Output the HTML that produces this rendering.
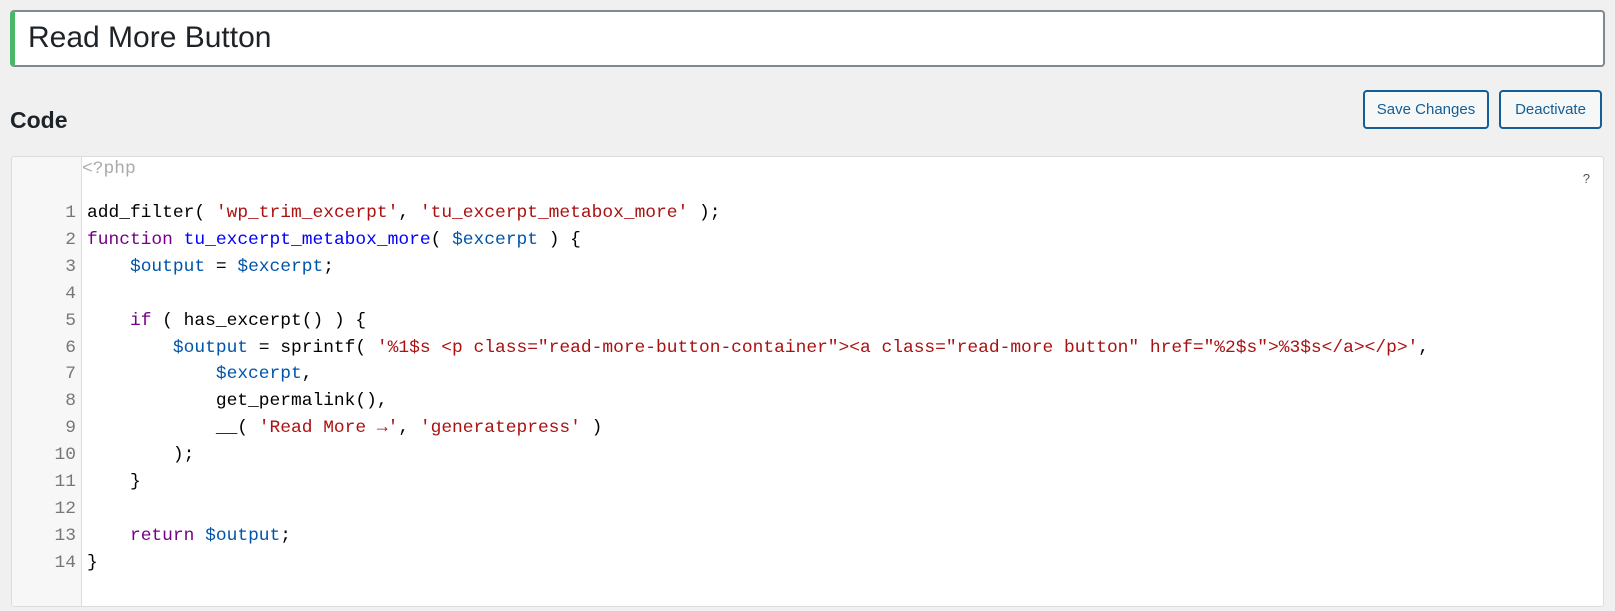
<!DOCTYPE html>
<html><head><meta charset="utf-8"><style>
body{margin:0;background:#f0f0f1;width:1615px;height:611px;overflow:hidden;font-family:"Segoe UI","Liberation Sans",sans-serif;}
.title{position:absolute;left:10px;top:10px;width:1588px;height:53px;background:#fff;border:2px solid #7e8993;border-left:5px solid #4ab866;border-radius:4px;}
.title span{position:absolute;left:13px;top:9px;font-size:30px;color:#1d2327;}
.code-h{position:absolute;left:10px;top:107px;font-size:23px;font-weight:600;color:#1d2327;}
.btn{position:absolute;top:90px;height:35px;border:2px solid #135e96;border-radius:4px;background:#f6f7f7;color:#135e96;font-size:15px;line-height:35px;text-align:center;}
.box{position:absolute;left:11px;top:156px;width:1591px;height:449px;background:#fff;border:1px solid #dcdcde;border-radius:3px;overflow:hidden;}
.gut{position:absolute;left:0;top:0;width:69px;height:100%;background:#f7f7f7;border-right:1px solid #ddd;}
pre{margin:0;position:absolute;font-family:"Liberation Mono",monospace;font-size:17.9px;line-height:26.9px;}
.ln{left:0;width:64px;text-align:right;color:#777;top:43px;}
.src{left:75px;top:43px;color:#000;}
.k{color:#708}.s{color:#a11}.v{color:#05a}
.php{position:absolute;left:70px;top:2px;font-family:"Liberation Mono",monospace;font-size:17.9px;color:#aaa;}
</style></head><body>
<div class="title"><span>Read More Button</span></div>
<div class="code-h">Code</div>
<div class="btn" style="left:1363px;width:122px">Save Changes</div>
<div class="btn" style="left:1499px;width:99px">Deactivate</div>
<div class="box">
<div class="gut"></div>
<div class="php">&lt;?php</div>
<div style="position:absolute;right:13px;top:14px;font-size:13px;color:#555">?</div>
<pre class="ln">1
2
3
4
5
6
7
8
9
10
11
12
13
14</pre>
<pre class="src">add_filter( <span class="s">'wp_trim_excerpt'</span>, <span class="s">'tu_excerpt_metabox_more'</span> );
<span class="k">function</span> <span style="color:#00f">tu_excerpt_metabox_more</span>( <span class="v">$excerpt</span> ) {
    <span class="v">$output</span> = <span class="v">$excerpt</span>;

    <span class="k">if</span> ( has_excerpt() ) {
        <span class="v">$output</span> = sprintf( <span class="s">'%1$s &lt;p class="read-more-button-container"&gt;&lt;a class="read-more button" href="%2$s"&gt;%3$s&lt;/a&gt;&lt;/p&gt;'</span>,
            <span class="v">$excerpt</span>,
            get_permalink(),
            __( <span class="s">'Read More →'</span>, <span class="s">'generatepress'</span> )
        );
    }

    <span class="k">return</span> <span class="v">$output</span>;
}</pre>
</div>
</body></html>
